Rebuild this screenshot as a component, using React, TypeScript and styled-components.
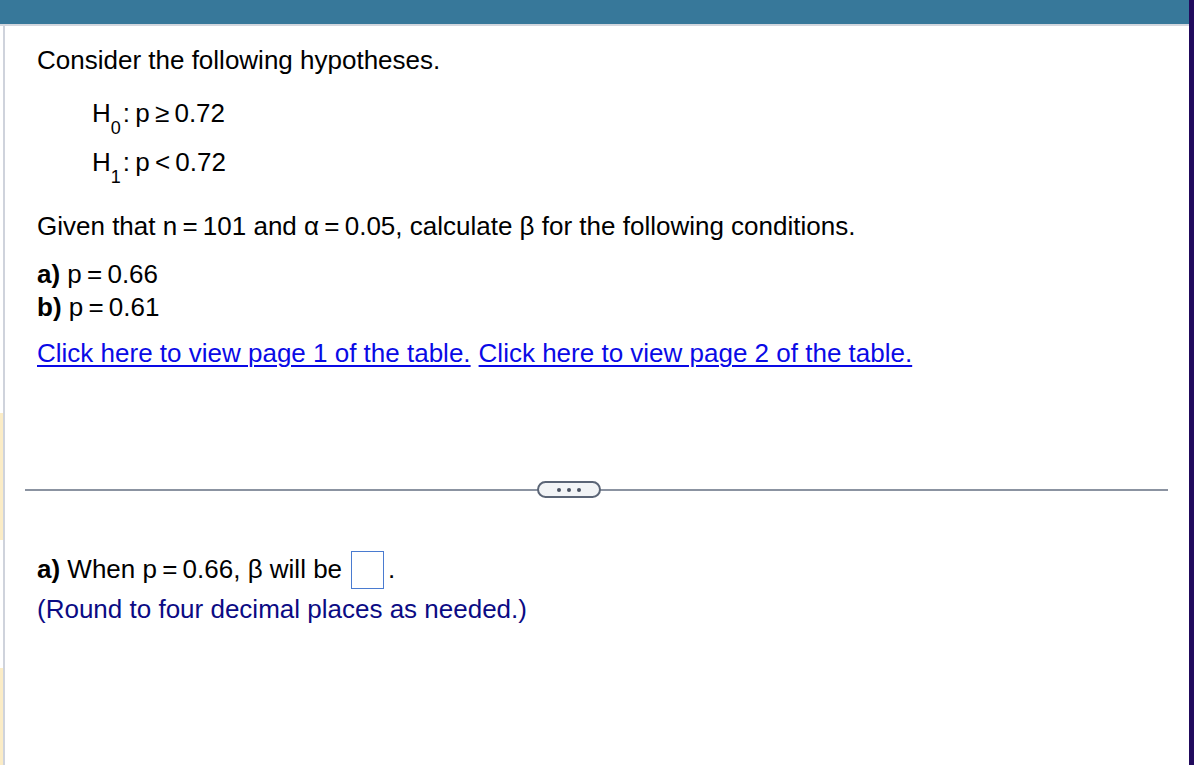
import React from "react";
import styled, { createGlobalStyle } from "styled-components";

const GlobalStyle = createGlobalStyle`
  html, body {
    margin: 0;
    padding: 0;
    background: #ffffff;
  }
  body {
    font-family: "Liberation Sans", Arial, Helvetica, sans-serif;
    overflow: hidden;
  }
`;

const Page = styled.div`
  display: flex;
  width: 1194px;
  height: 765px;
  overflow: hidden;
`;

const Main = styled.div`
  flex: 1;
  display: flex;
  flex-direction: column;
  min-width: 0;
`;

const TopBar = styled.div`
  height: 24px;
  background: #37789a;
  border-bottom: 2px solid #d3d7de;
  flex: none;
`;

const Body = styled.div`
  flex: 1;
  display: flex;
  min-height: 0;
`;

const Rail = styled.div`
  width: 3px;
  display: flex;
  flex-direction: column;
  border-right: 2px solid #cfd3dc;
  flex: none;
`;

const RailSegment = styled.div<{ $h: number; $mark?: boolean }>`
  height: ${(p) => p.$h}px;
  flex: none;
  background: ${(p) => (p.$mark ? "#fbecc6" : "transparent")};
`;

const Content = styled.div`
  flex: 1;
  padding: 19px 21px 0 20px;
  font-size: 26px;
  color: #000;
`;

const Section = styled.div`
  padding-left: 12px;
`;

const Line = styled.div<{ $mt?: number; $lh?: number }>`
  line-height: ${(p) => p.$lh ?? 30}px;
  margin-top: ${(p) => p.$mt ?? 0}px;
  white-space: nowrap;
`;

const Hypothesis = styled(Line)`
  padding-left: 55px;
  height: 30px;
`;

const Sub = styled.sub`
  font-size: 18px;
  line-height: 0;
  vertical-align: -12px;
  margin-right: 2px;
`;

const Bold = styled.b`
  font-weight: 700;
`;

const Links = styled(Line)`
  display: flex;
  gap: 8px;
`;

const TableLink = styled.a`
  color: #0a0ae6;
  text-decoration: underline;
  text-underline-offset: 3px;
  text-decoration-thickness: 2px;
  cursor: pointer;
`;

const Divider = styled.div`
  margin-top: 121px;
  height: 2px;
  background: #8b93a1;
  position: relative;
`;

const MorePill = styled.div`
  position: absolute;
  left: 512px;
  top: -8px;
  width: 60px;
  height: 13px;
  border: 2px solid #5b6576;
  border-radius: 9px;
  background: #f2f4f6;
  display: flex;
  align-items: center;
  justify-content: center;
  gap: 6px;
`;

const Dot = styled.span`
  width: 4px;
  height: 4px;
  border-radius: 50%;
  background: #4a5262;
`;

const AnswerLine = styled(Line)`
  margin-top: 58px;
  display: flex;
  align-items: center;
`;

const AnswerBox = styled.span`
  display: inline-block;
  width: 31px;
  height: 36px;
  border: 1.5px solid #4a7bd0;
  margin: 2px 4px 0 9px;
`;

const Hint = styled(Line)`
  color: #0b0b84;
  margin-top: 5px;
`;

const RightBar = styled.div`
  width: 5px;
  flex: none;
  background: #210a5d;
`;

const T = "\u2009";

export default function App() {
  return (
    <>
      <GlobalStyle />
      <Page>
        <Main>
          <TopBar />
          <Body>
            <Rail>
              <RailSegment $h={387} />
              <RailSegment $h={127} $mark />
              <RailSegment $h={128} />
              <RailSegment $h={100} $mark />
            </Rail>
            <Content>
              <Section>
                <Line>Consider the following hypotheses.</Line>
                <Hypothesis $mt={23}>
                  H<Sub>0</Sub>:{T}p{T}≥{T}0.72
                </Hypothesis>
                <Hypothesis $mt={19}>
                  H<Sub>1</Sub>:{T}p{T}&lt;{T}0.72
                </Hypothesis>
                <Line $mt={34}>
                  Given that n{T}={T}101 and α{T}={T}0.05, calculate β for the following conditions.
                </Line>
                <Line $mt={17} $lh={33}>
                  <Bold>a)</Bold> p{T}={T}0.66
                </Line>
                <Line $lh={33}>
                  <Bold>b)</Bold> p{T}={T}0.61
                </Line>
                <Links $mt={14}>
                  <TableLink>Click here to view page 1 of the table.</TableLink>
                  <TableLink>Click here to view page 2 of the table.</TableLink>
                </Links>
              </Section>
              <Divider>
                <MorePill>
                  <Dot />
                  <Dot />
                  <Dot />
                </MorePill>
              </Divider>
              <Section>
                <AnswerLine>
                  <Bold>a)</Bold>&nbsp;When p{T}={T}0.66, β will be
                  <AnswerBox />.
                </AnswerLine>
                <Hint>(Round to four decimal places as needed.)</Hint>
              </Section>
            </Content>
          </Body>
        </Main>
        <RightBar />
      </Page>
    </>
  );
}
